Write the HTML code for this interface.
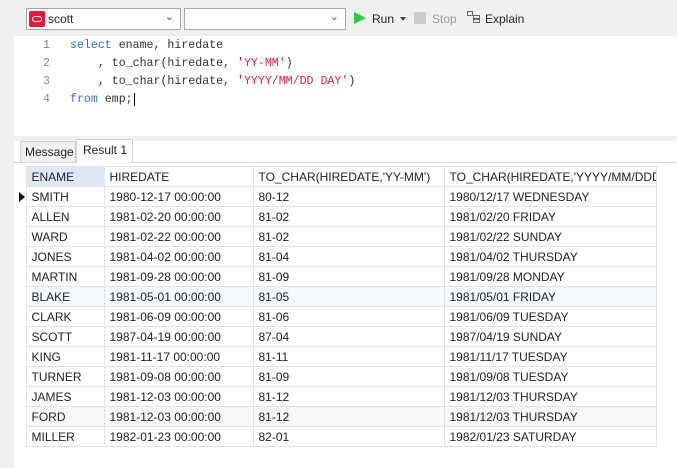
<!DOCTYPE html>
<html><head><meta charset="utf-8"><style>
*{margin:0;padding:0;box-sizing:border-box}
body{width:677px;height:468px;overflow:hidden;background:#fff;font-family:"Liberation Sans",sans-serif;font-size:12px;color:#222;position:relative}
.abs{position:absolute}
.tb{left:0;top:0;width:677px;height:36px;background:#f0f0f0}
.lm{left:0;top:0;width:14px;height:468px;background:#f0f0f0}
.combo{height:22px;top:8px;background:#fff;border:1px solid #a8a8a8}
.code{font-family:"Liberation Mono",monospace;font-size:11.6px;line-height:18px;white-space:pre;color:#333}
.kw{color:#2f6fd0}.st{color:#e0204a}
.ln{color:#888;text-align:right;width:12px}
table{border-collapse:collapse;position:absolute;left:18px;top:166px;table-layout:fixed;width:638px}
td{height:20px;border:1px solid #e3e3e3;padding-left:5px;font-size:12px;white-space:nowrap;overflow:hidden;color:#222}
tr.alt td{background:#f5f8fc}
td.ind{padding:0;border-left:none;border-top:none;border-bottom:none;background:#fff!important}
</style></head><body>
<div class="abs tb"></div>
<div class="abs lm"></div>
<div class="abs combo" style="left:26px;width:155px">
 <div class="abs" style="left:2px;top:2px;width:16px;height:16px;background:#e8173a;border-radius:2px"><div class="abs" style="left:3px;top:5px;width:10px;height:6px;border:1.5px solid #fff;border-radius:3px"></div></div>
 <div class="abs" style="left:21px;top:3px;font-size:12px">scott</div>
 <div class="abs" style="right:6px;top:1px;color:#555;font-size:11px">&#8964;</div>
</div>
<div class="abs combo" style="left:184px;width:162px"><div class="abs" style="right:6px;top:1px;color:#555;font-size:11px">&#8964;</div></div>
<div class="abs" style="left:354px;top:12px;width:0;height:0;border-left:12px solid #2ecc40;border-top:6px solid transparent;border-bottom:6px solid transparent"></div>
<div class="abs" style="left:372px;top:12px;font-size:12px">Run</div>
<div class="abs" style="left:400px;top:17px;border-top:4px solid #444;border-left:3px solid transparent;border-right:3px solid transparent"></div>
<div class="abs" style="left:414px;top:12px;width:12px;height:12px;background:#ccc"></div>
<div class="abs" style="left:432px;top:12px;color:#999">Stop</div>
<div class="abs" style="left:467px;top:11px;width:13px;height:13px">
 <div class="abs" style="left:0;top:0;width:6px;height:5px;border:1px solid #666"></div>
 <div class="abs" style="left:6px;top:4px;width:7px;height:4px;border:1px solid #666"></div>
 <div class="abs" style="left:6px;top:8px;width:7px;height:4px;border:1px solid #666"></div>
</div>
<div class="abs" style="left:485px;top:12px">Explain</div>
<div class="abs code ln" style="left:38px;top:37px">1
2
3
4</div>
<div class="abs code" style="left:70px;top:37px"><span class="kw">select</span> ename, hiredate
    , to_char(hiredate, <span class="st">'YY-MM'</span>)
    , to_char(hiredate, <span class="st">'YYYY/MM/DD DAY'</span>)
<span class="kw">from</span> emp;<span style="border-left:1px solid #000;margin-left:1px"></span></div>
<div class="abs" style="left:14px;top:136px;width:663px;height:5px;background:#f0f0f0"></div>
<div class="abs" style="left:14px;top:162px;width:663px;height:1px;background:#d8d8d8"></div>
<div class="abs" style="left:20px;top:141px;width:56px;height:21px;background:#f0f0f0;border:1px solid #d0d0d0;border-bottom:none;padding:3px 0 0 4px">Message</div>
<div class="abs" style="left:76px;top:139px;width:57px;height:24px;background:#fff;border:1px solid #d0d0d0;border-bottom:none;padding:3px 0 0 6px">Result 1</div>
<table>
<colgroup><col style="width:8px"><col style="width:78px"><col style="width:149px"><col style="width:191px"><col style="width:212px"></colgroup>
<tr><td class="ind"></td><td style="background:#dce8f6">ENAME</td><td>HIREDATE</td><td>TO_CHAR(HIREDATE,'YY-MM')</td><td>TO_CHAR(HIREDATE,'YYYY/MM/DDDA</td></tr>
<tr><td class="ind" style="position:relative"><div style="position:absolute;left:1px;top:5px;border-left:6px solid #111;border-top:5px solid transparent;border-bottom:5px solid transparent"></div></td><td>SMITH</td><td>1980-12-17 00:00:00</td><td>80-12</td><td>1980/12/17 WEDNESDAY</td></tr>
<tr><td class="ind"></td><td>ALLEN</td><td>1981-02-20 00:00:00</td><td>81-02</td><td>1981/02/20 FRIDAY</td></tr>
<tr><td class="ind"></td><td>WARD</td><td>1981-02-22 00:00:00</td><td>81-02</td><td>1981/02/22 SUNDAY</td></tr>
<tr><td class="ind"></td><td>JONES</td><td>1981-04-02 00:00:00</td><td>81-04</td><td>1981/04/02 THURSDAY</td></tr>
<tr><td class="ind"></td><td>MARTIN</td><td>1981-09-28 00:00:00</td><td>81-09</td><td>1981/09/28 MONDAY</td></tr>
<tr class="alt"><td class="ind"></td><td>BLAKE</td><td>1981-05-01 00:00:00</td><td>81-05</td><td>1981/05/01 FRIDAY</td></tr>
<tr><td class="ind"></td><td>CLARK</td><td>1981-06-09 00:00:00</td><td>81-06</td><td>1981/06/09 TUESDAY</td></tr>
<tr><td class="ind"></td><td>SCOTT</td><td>1987-04-19 00:00:00</td><td>87-04</td><td>1987/04/19 SUNDAY</td></tr>
<tr><td class="ind"></td><td>KING</td><td>1981-11-17 00:00:00</td><td>81-11</td><td>1981/11/17 TUESDAY</td></tr>
<tr><td class="ind"></td><td>TURNER</td><td>1981-09-08 00:00:00</td><td>81-09</td><td>1981/09/08 TUESDAY</td></tr>
<tr><td class="ind"></td><td>JAMES</td><td>1981-12-03 00:00:00</td><td>81-12</td><td>1981/12/03 THURSDAY</td></tr>
<tr class="alt"><td class="ind"></td><td>FORD</td><td>1981-12-03 00:00:00</td><td>81-12</td><td>1981/12/03 THURSDAY</td></tr>
<tr><td class="ind"></td><td>MILLER</td><td>1982-01-23 00:00:00</td><td>82-01</td><td>1982/01/23 SATURDAY</td></tr>
</table>
</body></html>
